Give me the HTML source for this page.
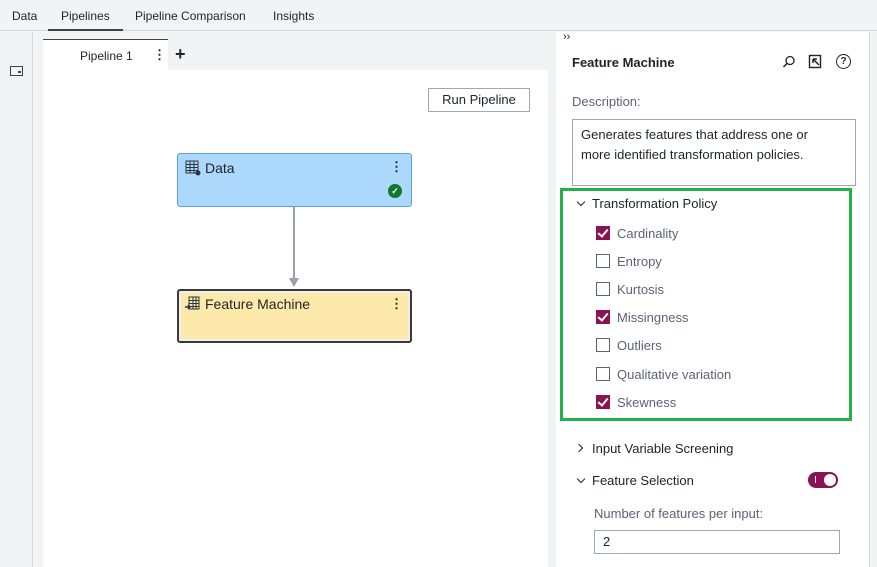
<!DOCTYPE html>
<html><head><style>
*{box-sizing:border-box;margin:0;padding:0}
body{width:877px;height:567px;overflow:hidden;background:#f2f3f5;font-family:"Liberation Sans",sans-serif;font-size:13px;color:#1e232b;position:relative}
.a{position:absolute}
.top{left:0;top:0;width:877px;height:31px;background:#f2f3f5;border-bottom:1px solid #d5d8de}
.tab{top:9px;font-size:12px;color:#1e232b}
.cb{width:14px;height:14px;border:1.5px solid #5b6472;background:#fff;left:596px}
.cb.on{background:#8b1254;border-color:#8b1254}
.cb.on:after{content:"";position:absolute;left:3px;top:0px;width:4px;height:8px;border:solid #fff;border-width:0 2px 2px 0;transform:rotate(40deg)}
.lbl{left:617px;color:#5b6472;font-size:13px}
.chd{width:6px;height:6px;border:solid #1e232b;border-width:0 1.3px 1.3px 0;transform:rotate(45deg)}
.chr{width:6px;height:6px;border:solid #1e232b;border-width:0 1.3px 1.3px 0;transform:rotate(-45deg)}
</style></head><body>
<div class="a top"></div>
<div class="a tab" style="left:12px">Data</div>
<div class="a tab" style="left:61px">Pipelines</div>
<div class="a" style="left:48px;top:29px;width:75px;height:2px;background:#3b4350"></div>
<div class="a tab" style="left:135px">Pipeline Comparison</div>
<div class="a tab" style="left:273px">Insights</div>
<div class="a" style="left:0;top:32px;width:33px;height:535px;background:#f2f3f5;border-right:1px solid #d5d8de"></div>
<div class="a" style="left:10px;top:66px;width:13px;height:10px;border:1px solid #3b4350"></div>
<div class="a" style="left:18px;top:71px;width:3px;height:2px;background:#3b4350"></div>
<div class="a" style="left:43px;top:70px;width:505px;height:497px;background:#fff"></div>
<div class="a" style="left:43px;top:39px;width:125px;height:32px;background:#fff;border-top:1px solid #3b4350"></div>
<div class="a" style="left:80px;top:49px;font-size:12px">Pipeline 1</div>
<div class="a" style="left:153px;top:47px;font-size:13px;font-weight:bold">⋮</div>
<div class="a" style="left:175px;top:44px;font-size:18px;font-weight:bold">+</div>
<div class="a" style="left:428px;top:88px;width:102px;height:24px;border:1px solid #a0a7b2;background:#fff;font-size:13px;text-align:center;line-height:22px">Run Pipeline</div>
<div class="a" style="left:177px;top:153px;width:235px;height:54px;background:#acd8fb;border:1px solid #5aa2dd;border-radius:3px"></div>
<svg class="a" style="left:185px;top:160px" width="16" height="16"><rect x="1" y="1" width="12" height="12" fill="none" stroke="#2b3340"/><path d="M1 4.5h12M1 7.5h12M1 10.5h12M5 1v12M9 1v12" stroke="#2b3340"/><circle cx="13" cy="13" r="2.5" fill="#2b3340"/></svg>
<div class="a" style="left:205px;top:160px;font-size:14px">Data</div>
<div class="a" style="left:390px;top:159px;font-weight:bold">⋮</div>
<div class="a" style="left:388px;top:184px;width:14px;height:14px;border-radius:50%;background:#0f7a2d;color:#fff;font-size:9px;text-align:center;line-height:14px;font-weight:bold">✓</div>
<div class="a" style="left:293px;top:207px;width:2px;height:72px;background:#9aa0a8"></div>
<div class="a" style="left:289px;top:278px;width:0;height:0;border-left:5px solid transparent;border-right:5px solid transparent;border-top:9px solid #9aa0a8"></div>
<div class="a" style="left:177px;top:289px;width:235px;height:54px;background:#fde9aa;border:2px solid #3a3a3a;border-radius:3px;box-shadow:inset 0 0 0 2px #eee"></div>
<svg class="a" style="left:185px;top:296px" width="16" height="16"><rect x="4" y="1" width="10" height="12" fill="none" stroke="#2b3340"/><path d="M4 4.5h10M4 7.5h10M4 10.5h10M8 1v12M11 1v12" stroke="#2b3340"/><path d="M0 11h5M3 9l2 2-2 2" stroke="#2b3340" stroke-width="1.5" fill="none"/></svg>
<div class="a" style="left:205px;top:296px;font-size:14px">Feature Machine</div>
<div class="a" style="left:390px;top:296px;font-weight:bold">⋮</div>
<div class="a" style="left:556px;top:32px;width:313px;height:535px;background:#fff"></div>
<div class="a" style="left:869px;top:32px;width:8px;height:535px;background:#f2f3f5;border-left:1px solid #d5d8de"></div>
<div class="a" style="left:563px;top:31px;font-size:11px">››</div>
<div class="a" style="left:572px;top:55px;font-size:13px;font-weight:bold">Feature Machine</div>
<svg class="a" style="left:782px;top:55px" width="14" height="14"><circle cx="8" cy="5.5" r="4" fill="none" stroke="#222" stroke-width="1.3"/><path d="M5 8.5l-3.5 3.5" stroke="#222" stroke-width="1.5"/></svg>
<svg class="a" style="left:808px;top:54px" width="16" height="16"><rect x="1.5" y="1.5" width="11" height="12" fill="none" stroke="#222" stroke-width="1.4"/><path d="M5 5l6 6M5 5v4M5 5h4" stroke="#222" stroke-width="1.5"/></svg>
<div class="a" style="left:836px;top:54px;width:15px;height:15px;border:1.4px solid #222;border-radius:50%;font-size:10px;font-weight:bold;text-align:center;line-height:13px">?</div>
<div class="a" style="left:572px;top:94px;color:#5b6472;font-size:13px">Description:</div>
<div class="a" style="left:572px;top:119px;width:284px;height:67px;border:1px solid #a0a7b2;padding:5px 30px 5px 8px;font-size:13px;line-height:20px">Generates features that address one or more identified transformation policies.</div>
<div class="a" style="left:560px;top:188px;width:292px;height:233px;border:3px solid #21b24a"></div>
<div class="a chd" style="left:578px;top:199px"></div>
<div class="a" style="left:592px;top:196px;font-size:13px">Transformation Policy</div>
<div class="a cb on" style="top:226px"></div><div class="a lbl" style="top:226px">Cardinality</div>
<div class="a cb" style="top:254px"></div><div class="a lbl" style="top:254px">Entropy</div>
<div class="a cb" style="top:282px"></div><div class="a lbl" style="top:282px">Kurtosis</div>
<div class="a cb on" style="top:310px"></div><div class="a lbl" style="top:310px">Missingness</div>
<div class="a cb" style="top:338px"></div><div class="a lbl" style="top:338px">Outliers</div>
<div class="a cb" style="top:367px"></div><div class="a lbl" style="top:367px">Qualitative variation</div>
<div class="a cb on" style="top:395px"></div><div class="a lbl" style="top:395px">Skewness</div>
<div class="a chr" style="left:576px;top:445px"></div>
<div class="a" style="left:592px;top:441px">Input Variable Screening</div>
<div class="a chd" style="left:578px;top:476px"></div>
<div class="a" style="left:592px;top:473px">Feature Selection</div>
<div class="a" style="left:808px;top:472px;width:30px;height:16px;border-radius:8px;background:#8b1254"></div>
<div class="a" style="left:824px;top:474px;width:12px;height:12px;border-radius:50%;background:#fff"></div>
<div class="a" style="left:815px;top:476px;width:1px;height:7px;background:#fff"></div>
<div class="a" style="left:594px;top:506px;color:#5b6472">Number of features per input:</div>
<div class="a" style="left:594px;top:530px;width:246px;height:24px;border:1px solid #a0a7b2;padding-left:8px;line-height:22px">2</div>
</body></html>
